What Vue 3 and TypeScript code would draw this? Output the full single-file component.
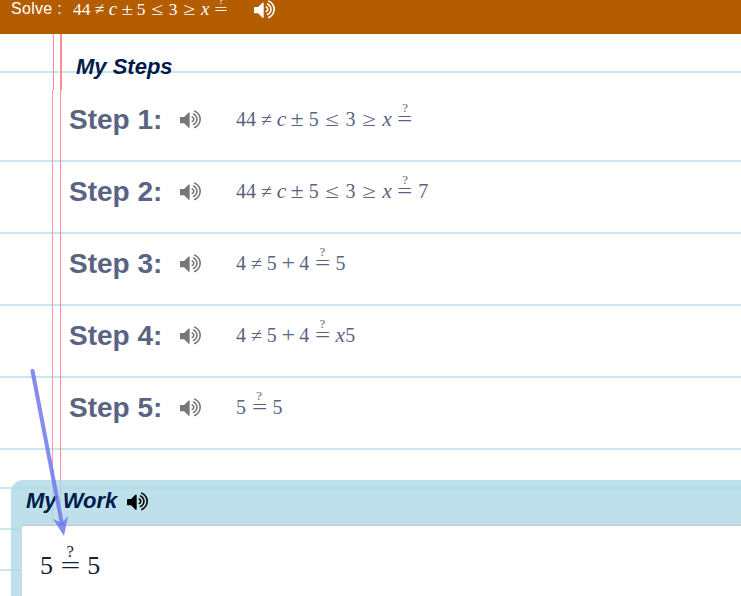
<template>
  <div class="page">
    <header class="solve-bar">
      <span class="solve-label">Solve :</span>
      <MathLine class="solve-math" :tokens="problem" />
      <svg class="speaker solve-speaker" viewBox="0 0 1664 1792"><path :d="speakerPath" /></svg>
    </header>

    <div class="heading-block">
      <h2 class="my-steps">My Steps</h2>
    </div>

    <div class="steps">
      <div v-for="(step, i) in steps" :key="i" class="step-row">
        <span class="step-label">Step {{ i + 1 }}:</span>
        <svg class="speaker step-speaker" viewBox="0 0 1664 1792"><path :d="speakerPath" /></svg>
        <MathLine class="step-math" :tokens="step" />
      </div>
    </div>

    <div class="work-area">
      <section class="work-panel">
        <div class="work-head">
          <h2 class="my-work">My Work</h2>
          <svg class="speaker work-speaker" viewBox="0 0 1664 1792"><path :d="speakerPath" /></svg>
        </div>
        <div class="work-box">
          <MathLine class="work-math" :tokens="work" />
        </div>
      </section>
    </div>

    <!-- margin lines -->
    <i class="margin m1"></i>
    <i class="margin m2"></i>
    <i class="margin m3"></i>
    <i class="margin m4"></i>

    <svg class="arrow" width="741" height="596" viewBox="0 0 741 596">
      <line x1="32.5" y1="371" x2="62" y2="524" stroke="#7078ee" stroke-width="4" stroke-linecap="round" opacity="0.85" />
      <polygon points="53,519 62,523 68,516 64,536" fill="#7078ee" opacity="0.85" />
    </svg>
  </div>
</template>

<script setup lang="ts">
import { defineComponent, h } from 'vue'

type Token = string

// n: number, v: variable, r: relation, b: binary, q: stacked ?=
const MathLine = defineComponent({
  props: { tokens: { type: Array as () => Token[], required: true } },
  setup(props) {
    return () =>
      h(
        'span',
        { class: 'math' },
        props.tokens.map((t) => {
          if (t === '?=') {
            return h('span', { class: 'm-q' }, [
              h('span', { class: 'm-q-top' }, '?'),
              h('span', { class: 'm-q-eq' }, '=')
            ])
          }
          let kind = 'm-n'
          if (/^[a-z]$/.test(t)) kind = 'm-v'
          else if (t === '≠') kind = 'm-ne'
          else if (t === '≤' || t === '≥') kind = 'm-r'
          else if (t === '±' || t === '+') kind = 'm-b'
          return h('span', { class: kind }, t)
        })
      )
  }
})

const speakerPath =
  'M768 287v1218q0 26-19 45t-45 19-45-19l-333-333h-262q-26 0-45-19t-19-45v-384q0-26 19-45t45-19h262l333-333q19-19 45-19t45 19 19 45zm384 609q0 76-42.5 141.5t-112.5 93.5q-10 5-25 5-26 0-45-18.5t-19-45.5q0-21 12-35.5t29-25 34-23 29-36 12-56.5-12-56.5-29-36-34-23-29-25-12-35.5q0-27 19-45.5t45-18.5q15 0 25 5 70 27 112.5 93t42.5 142zm256 0q0 153-85 282.5t-225 188.5q-13 5-25 5-27 0-46-19t-19-45q0-39 39-59 56-29 76-44 74-54 115.5-135.5t41.5-173.5-41.5-173.5-115.5-135.5q-20-15-76-44-39-20-39-59 0-26 19-45t45-19q13 0 26 5 140 59 225 188.5t85 282.5zm256 0q0 230-127 422.5t-338 283.5q-13 5-26 5-26 0-45-19t-19-45q0-36 39-59 7-4 22.5-10.5t22.5-10.5q46-25 82-51 123-91 192-227t69-289-69-289-192-227q-36-26-82-51-7-4-22.5-10.5t-22.5-10.5q-39-23-39-59 0-26 19-45t45-19q13 0 26 5 211 91 338 283.5t127 422.5z'

const first: Token[] = ['44', '≠', 'c', '±', '5', '≤', '3', '≥', 'x', '?=']
const problem = first
const steps: Token[][] = [
  first,
  [...first, '7'],
  ['4', '≠', '5', '+', '4', '?=', '5'],
  ['4', '≠', '5', '+', '4', '?=', 'x', '5'],
  ['5', '?=', '5']
]
const work: Token[] = ['5', '?=', '5']
</script>

<style>
html,
body {
  margin: 0;
  overflow: hidden;
}

.math {
  font-family: "Liberation Serif", "Times New Roman", serif;
  white-space: nowrap;
  display: inline-flex;
  align-items: baseline;
}

.m-v {
  font-style: italic;
  font-size: 1.08em;
}

.m-ne {
  display: inline-block;
  width: 0.6em;
  margin: 0 0.22em;
  text-align: center;
}

.m-r {
  display: inline-block;
  width: 0.72em;
  margin: 0 0.31em;
  text-align: center;
  transform: scaleX(1.25);
}

.m-b {
  display: inline-block;
  width: 0.72em;
  margin: 0 0.2em;
  text-align: center;
  transform: scaleX(1.2);
}

.m-q {
  position: relative;
  display: inline-block;
  width: 0.72em;
  margin: 0 0.3em;
  text-align: center;
}

.m-q-eq {
  display: inline-block;
  line-height: 0.45;
  transform: scaleX(1.35);
}

.m-q-top {
  position: absolute;
  left: 0;
  right: 0;
  top: -0.3em;
  font-size: 0.64em;
  line-height: 0.7;
}
</style>

<style scoped>
.page {
  position: relative;
  width: 741px;
  height: 596px;
  overflow: hidden;
  background: #fff;
  font-family: "Liberation Sans", Arial, sans-serif;
}

.solve-bar {
  height: 34px;
  background: #b35c00;
  color: #fff;
  display: flex;
  align-items: flex-start;
  overflow: hidden;
  position: relative;
  z-index: 1;
}

.solve-label {
  margin: 0 0 0 11px;
  font-size: 16px;
  line-height: 18px;
  width: 62px;
  letter-spacing: 0.3px;
  flex-shrink: 0;
}

.solve-math {
  font-size: 17.5px;
  line-height: 18px;
  color: #fff;
}

.solve-speaker {
  fill: #fff;
  margin: -2px 0 0 21px;
}

.speaker {
  width: 21px;
  height: 22.6px;
  flex-shrink: 0;
}

.heading-block {
  height: 56px;
  background: linear-gradient(#c9e6ef, #c9e6ef) 0 37px / 100% 2px no-repeat;
  box-sizing: border-box;
  padding: 20px 0 0 76px;
}

.my-steps,
.my-work {
  margin: 0;
  font-size: 22px;
  line-height: 26px;
  font-weight: bold;
  font-style: italic;
  color: #001a4d;
}

.step-row {
  height: 72px;
  box-sizing: border-box;
  border-bottom: 2px solid #c9e6ef;
  display: flex;
  align-items: center;
  padding: 0 0 10px 69px;
}

.step-label {
  width: 111px;
  font-size: 28px;
  font-weight: bold;
  color: #5a6482;
  flex-shrink: 0;
}

.step-speaker {
  fill: #777;
  margin: 0 35px 2px 0;
}

.step-math {
  font-size: 20px;
  color: #5a6482;
  padding-bottom: 2px;
}

.work-area {
  height: 146px;
  box-sizing: border-box;
  padding: 30px 0 0 11px;
  background: repeating-linear-gradient(#fff 0 37px, #c9e6ef 37px 39px, #fff 39px 41px);
  position: relative;
}

.work-panel {
  position: relative;
  z-index: 1;
  height: 200px;
  margin-right: -20px;
  background: rgba(173, 216, 230, 0.8);
  border-radius: 12px 0 0 0;
  padding: 0 0 0 10px;
}

.work-head {
  height: 45px;
  display: flex;
  align-items: center;
  padding: 0 0 3px 5px;
  box-sizing: border-box;
}

.work-speaker {
  fill: #000;
  margin-left: 10px;
}

.work-box {
  background: #fff;
  border-top: 1px solid #c4c4c4;
  border-left: 1px solid #d5d5d5;
  border-radius: 4px 0 0 0;
  height: 150px;
  padding: 25px 0 0 18px;
}

.work-math {
  font-size: 26px;
  color: #14213d;
}

.margin {
  position: absolute;
  background: #ff8a9a;
  width: 1px;
}

.m1 { left: 53px; top: 34px; height: 56px; }
.m2 { left: 60px; top: 34px; height: 56px; width: 2px; }
.m3 { left: 52px; top: 90px; height: 436px; background: #ff9aa8; }
.m4 { left: 60px; top: 90px; height: 436px; }

.arrow {
  position: absolute;
  left: 0;
  top: 0;
  z-index: 2;
  pointer-events: none;
}
</style>
